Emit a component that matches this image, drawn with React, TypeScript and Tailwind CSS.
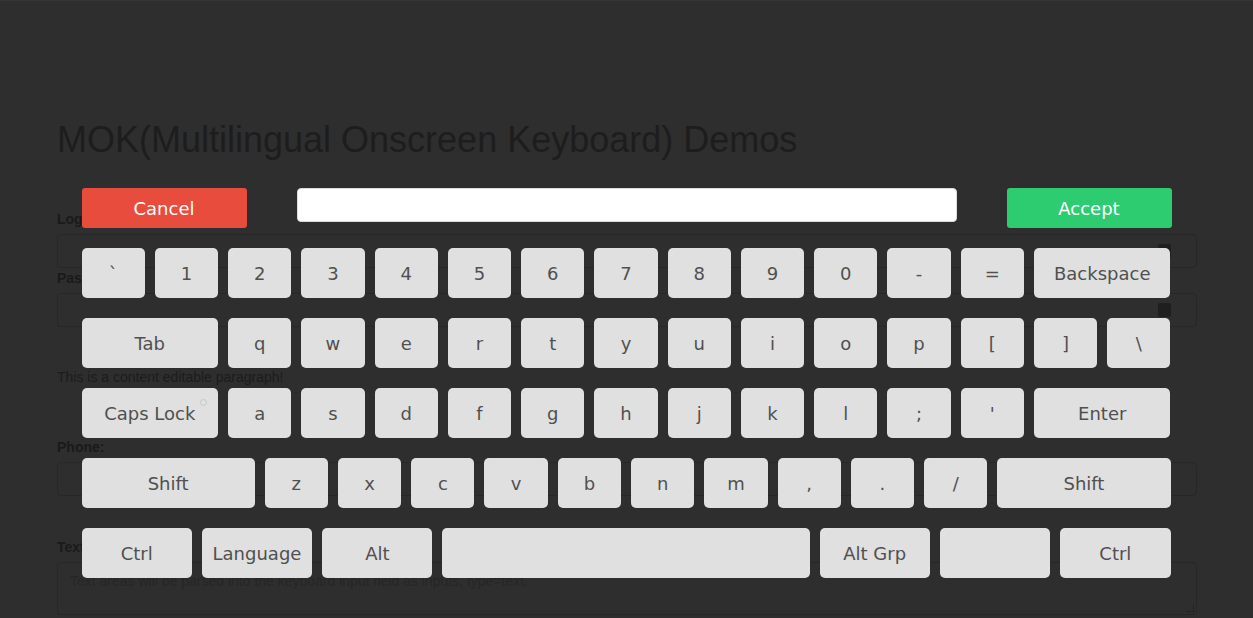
import React from 'react'

type KeyDef = { label: string; size?: 'unit' | 'wide' | 'shift' }

const rows: KeyDef[][] = [
  [
    ...['`', '1', '2', '3', '4', '5', '6', '7', '8', '9', '0', '-', '='].map((k) => ({ label: k })),
    { label: 'Backspace', size: 'wide' },
  ],
  [
    { label: 'Tab', size: 'wide' },
    ...['q', 'w', 'e', 'r', 't', 'y', 'u', 'i', 'o', 'p', '[', ']', '\\'].map((k) => ({ label: k })),
  ],
  [
    { label: 'Caps Lock', size: 'wide' },
    ...['a', 's', 'd', 'f', 'g', 'h', 'j', 'k', 'l', ';', "'"].map((k) => ({ label: k })),
    { label: 'Enter', size: 'wide' },
  ],
  [
    { label: 'Shift', size: 'shift' },
    ...['z', 'x', 'c', 'v', 'b', 'n', 'm', ',', '.', '/'].map((k) => ({ label: k })),
    { label: 'Shift', size: 'shift' },
  ],
]

const sizeClass = {
  unit: 'flex-[1_1_0px]',
  wide: 'flex-[2_1_10px]',
  shift: 'flex-[2.5_1_15px]',
}

function Key({ label, className = '', children }: { label: string; className?: string; children?: React.ReactNode }) {
  return (
    <button className={`relative h-[50px] rounded-[5px] bg-[#e0e0e0] text-[#505050] text-[18px] flex items-center justify-center ${className}`}>
      {label}
      {children}
    </button>
  )
}

function FakeInput({ icon, className = '' }: { icon?: boolean; className?: string }) {
  return (
    <div className={`h-[34px] rounded-[4px] border border-[#272727] flex items-center justify-end pr-[25px] ${className}`}>
      {icon && <span className="w-[13px] h-[14px] rounded-[2px] bg-[#1f1f1f]" />}
    </div>
  )
}

export default function App() {
  return (
    <div className="relative h-[618px] overflow-hidden bg-[#2e2e2e] border-t border-[#343434] font-['Liberation_Sans',Arial,sans-serif]">
      {/* page underneath the overlay */}
      <div className="w-[1140px] ml-[57px] pt-[119px]">
        <h1 className="text-[36px] leading-[40px] text-[#1d1d1d]">MOK(Multilingual Onscreen Keyboard) Demos</h1>

        <label className="block mt-[49px] mb-[5px] text-[14px] leading-[20px] font-bold text-[#1a1a1a]">Login:</label>
        <FakeInput icon />

        <label className="block mb-[5px] text-[14px] leading-[20px] font-bold text-[#1a1a1a]">Password:</label>
        <FakeInput icon />

        <p className="mt-[40px] text-[14px] leading-[20px] text-[#1c1c1c]">This is a content editable paragraph!</p>

        <label className="block mt-[50px] mb-[5px] text-[14px] leading-[20px] font-bold text-[#1a1a1a]">Phone:</label>
        <FakeInput />

        <label className="block mt-[41px] mb-[5px] text-[14px] leading-[20px] font-bold text-[#1a1a1a]">Textarea:</label>
        <div className="h-[53px] rounded-[4px] border border-[#272727] px-[12px] pt-[8px] text-[14px] text-[#262626] relative">
          Text areas will be parsed into the keyboard input field as inputs, type=text.
          <span className="absolute right-[2px] bottom-[2px] w-[8px] h-[8px] border-r border-b border-[#242424]" />
        </div>
      </div>

      {/* keyboard overlay */}
      <div className="absolute inset-0 pt-[187px] font-['DejaVu_Sans',Verdana,sans-serif]">
        <div className="w-[1090px] mx-auto flex flex-col">
          <div className="flex items-start justify-between mb-[20px]">
            <button className="w-[165px] h-[40px] rounded-[3px] bg-[#e74c3c] text-white text-[18px]">Cancel</button>
            <div className="w-[660px] h-[34px] rounded-[4px] bg-white border border-[#ddd]" />
            <button className="w-[165px] h-[40px] rounded-[3px] bg-[#2ecc71] text-white text-[18px]">Accept</button>
          </div>

          <div className="w-[1089px] flex flex-col gap-[20px]">
            {rows.map((row, i) => (
              <div key={i} className="flex gap-[10px]">
                {row.map((k, j) => (
                  <Key key={j} label={k.label} className={sizeClass[k.size ?? 'unit']}>
                    {k.label === 'Caps Lock' && (
                      <span className="absolute top-[11px] right-[11px] w-[7px] h-[7px] rounded-full border border-[#c8c8c8]" />
                    )}
                  </Key>
                ))}
              </div>
            ))}
            <div className="flex gap-[10px]">
              <Key label="Ctrl" className="w-[110.33px] shrink-0" />
              <Key label="Language" className="w-[110.33px] shrink-0" />
              <Key label="Alt" className="w-[110.33px] shrink-0" />
              <Key label="" className="flex-1" />
              <Key label="Alt Grp" className="w-[110.33px] shrink-0" />
              <Key label="" className="w-[110.33px] shrink-0" />
              <Key label="Ctrl" className="w-[110.33px] shrink-0" />
            </div>
          </div>
        </div>
      </div>
    </div>
  )
}
